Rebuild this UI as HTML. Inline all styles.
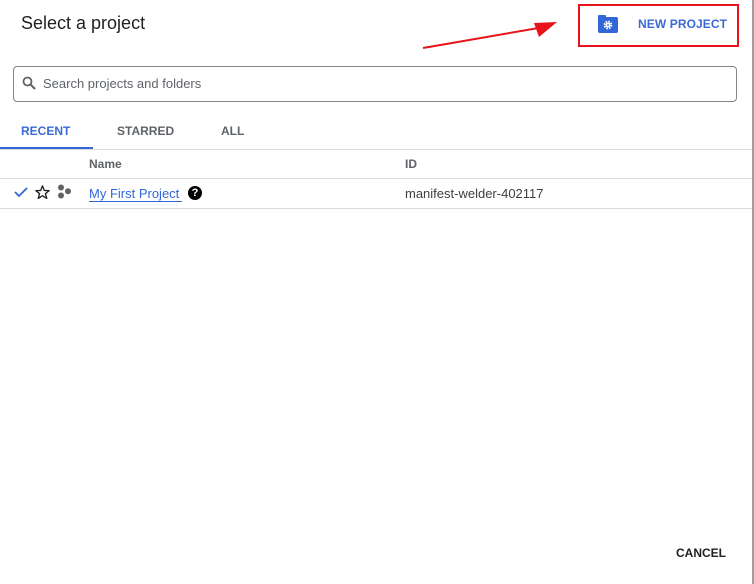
<!DOCTYPE html>
<html><head><style>
body{margin:0;width:754px;height:584px;background:#fff;font-family:"Liberation Sans",sans-serif;position:relative;overflow:hidden}
.a{position:absolute}
</style></head><body>
<div class="a" style="left:752px;top:0;width:2px;height:584px;background:#9e9e9e"></div>
<div class="a" style="left:21px;top:13px;font-size:18px;color:#202124">Select a project</div>
<div class="a" style="left:578px;top:4px;width:157px;height:39px;border:2px solid #e8131a"></div>
<div class="a" style="left:598px;top:17px;width:20px;height:16px;background:#3367d6;border-radius:2px"></div>
<div class="a" style="left:598px;top:15px;width:8px;height:4px;background:#3367d6;border-radius:1px"></div>
<svg class="a" style="left:603px;top:20px" width="10" height="10" viewBox="0 0 10 10"><circle cx="5" cy="5" r="3.4" fill="none" stroke="#fff" stroke-width="2" stroke-dasharray="1.6 1.1"/><circle cx="5" cy="5" r="2.4" fill="#fff"/><circle cx="5" cy="5" r="0.9" fill="#3367d6"/></svg>
<div class="a" style="left:638px;top:17px;font-size:12px;font-weight:bold;color:#3a6ad4;letter-spacing:0.1px">NEW PROJECT</div>
<svg class="a" style="left:420px;top:14px" width="150" height="40"><line x1="3" y1="34" x2="130" y2="12" stroke="#e8131a" stroke-width="2"/><polygon points="114,9 137,8 119,23" fill="#e8131a"/></svg>
<div class="a" style="left:13px;top:66px;width:722px;height:34px;border:1px solid #80868b;border-radius:4px"></div>
<svg class="a" style="left:22px;top:76px" width="14" height="14" viewBox="0 0 14 14"><circle cx="5.5" cy="5.5" r="4" fill="none" stroke="#5f6368" stroke-width="1.8"/><line x1="8.5" y1="8.5" x2="13" y2="13" stroke="#5f6368" stroke-width="2"/></svg>
<div class="a" style="left:43px;top:76px;font-size:13px;color:#5f6368">Search projects and folders</div>
<div class="a" style="left:21px;top:124px;font-size:12px;font-weight:bold;color:#3a6ad4">RECENT</div>
<div class="a" style="left:117px;top:124px;font-size:12px;font-weight:bold;color:#5f6368">STARRED</div>
<div class="a" style="left:221px;top:124px;font-size:12px;font-weight:bold;color:#5f6368">ALL</div>
<div class="a" style="left:0;top:147px;width:93px;height:2px;background:#3367d6"></div>
<div class="a" style="left:0;top:149px;width:752px;height:1px;background:#dadce0"></div>
<div class="a" style="left:89px;top:157px;font-size:12px;font-weight:bold;color:#5f6368">Name</div>
<div class="a" style="left:405px;top:157px;font-size:12px;font-weight:bold;color:#5f6368">ID</div>
<div class="a" style="left:0;top:178px;width:752px;height:1px;background:#dadce0"></div>
<svg class="a" style="left:14px;top:186px" width="14" height="12"><polyline points="1,6 5,10 13,2" fill="none" stroke="#3367d6" stroke-width="1.8"/></svg>
<svg class="a" style="left:35px;top:185px" width="15" height="14" viewBox="0 0 24 23"><polygon points="12,1.5 15,9 23,9.3 16.8,14.3 19,22 12,17.6 5,22 7.2,14.3 1,9.3 9,9" fill="none" stroke="#202124" stroke-width="2.2" stroke-linejoin="round"/></svg>
<svg class="a" style="left:57px;top:184px" width="15" height="15"><circle cx="4" cy="3.5" r="3" fill="#5f6368"/><circle cx="11" cy="7.2" r="3" fill="#5f6368"/><circle cx="4" cy="11.5" r="3" fill="#5f6368"/></svg>
<div class="a" style="left:89px;top:186px;font-size:13px;color:#3367d6;border-bottom:1px solid #3367d6;padding-right:3px;line-height:15px">My First Project</div>
<div class="a" style="left:188px;top:186px;width:14px;height:14px;border-radius:50%;background:#000;color:#fff;font-size:11px;font-weight:bold;text-align:center;line-height:14px">?</div>
<div class="a" style="left:405px;top:186px;font-size:13px;color:#3c4043">manifest-welder-402117</div>
<div class="a" style="left:0;top:208px;width:752px;height:1px;background:#dadce0"></div>
<div class="a" style="left:676px;top:546px;font-size:12px;font-weight:bold;color:#202124">CANCEL</div>
</body></html>
